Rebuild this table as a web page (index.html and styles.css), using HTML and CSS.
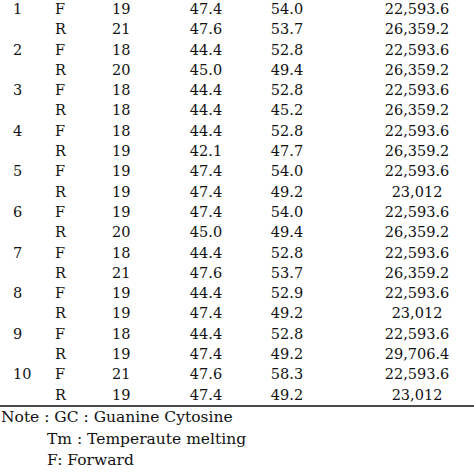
FILE: index.html
```html
<!DOCTYPE html>
<html>
<head>
<meta charset="utf-8">
<link rel="stylesheet" href="styles.css">
</head>
<body>
<div class="page">
  <div class="table">
    <div class="row"><span class="c1">1</span><span class="c2">F</span><span class="c3">19</span><span class="c4">47.4</span><span class="c5">54.0</span><span class="c6">22,593.6</span></div>
    <div class="row"><span class="c1"></span><span class="c2">R</span><span class="c3">21</span><span class="c4">47.6</span><span class="c5">53.7</span><span class="c6">26,359.2</span></div>
    <div class="row"><span class="c1">2</span><span class="c2">F</span><span class="c3">18</span><span class="c4">44.4</span><span class="c5">52.8</span><span class="c6">22,593.6</span></div>
    <div class="row"><span class="c1"></span><span class="c2">R</span><span class="c3">20</span><span class="c4">45.0</span><span class="c5">49.4</span><span class="c6">26,359.2</span></div>
    <div class="row"><span class="c1">3</span><span class="c2">F</span><span class="c3">18</span><span class="c4">44.4</span><span class="c5">52.8</span><span class="c6">22,593.6</span></div>
    <div class="row"><span class="c1"></span><span class="c2">R</span><span class="c3">18</span><span class="c4">44.4</span><span class="c5">45.2</span><span class="c6">26,359.2</span></div>
    <div class="row"><span class="c1">4</span><span class="c2">F</span><span class="c3">18</span><span class="c4">44.4</span><span class="c5">52.8</span><span class="c6">22,593.6</span></div>
    <div class="row"><span class="c1"></span><span class="c2">R</span><span class="c3">19</span><span class="c4">42.1</span><span class="c5">47.7</span><span class="c6">26,359.2</span></div>
    <div class="row"><span class="c1">5</span><span class="c2">F</span><span class="c3">19</span><span class="c4">47.4</span><span class="c5">54.0</span><span class="c6">22,593.6</span></div>
    <div class="row"><span class="c1"></span><span class="c2">R</span><span class="c3">19</span><span class="c4">47.4</span><span class="c5">49.2</span><span class="c6">23,012</span></div>
    <div class="row"><span class="c1">6</span><span class="c2">F</span><span class="c3">19</span><span class="c4">47.4</span><span class="c5">54.0</span><span class="c6">22,593.6</span></div>
    <div class="row"><span class="c1"></span><span class="c2">R</span><span class="c3">20</span><span class="c4">45.0</span><span class="c5">49.4</span><span class="c6">26,359.2</span></div>
    <div class="row"><span class="c1">7</span><span class="c2">F</span><span class="c3">18</span><span class="c4">44.4</span><span class="c5">52.8</span><span class="c6">22,593.6</span></div>
    <div class="row"><span class="c1"></span><span class="c2">R</span><span class="c3">21</span><span class="c4">47.6</span><span class="c5">53.7</span><span class="c6">26,359.2</span></div>
    <div class="row"><span class="c1">8</span><span class="c2">F</span><span class="c3">19</span><span class="c4">44.4</span><span class="c5">52.9</span><span class="c6">22,593.6</span></div>
    <div class="row"><span class="c1"></span><span class="c2">R</span><span class="c3">19</span><span class="c4">47.4</span><span class="c5">49.2</span><span class="c6">23,012</span></div>
    <div class="row"><span class="c1">9</span><span class="c2">F</span><span class="c3">18</span><span class="c4">44.4</span><span class="c5">52.8</span><span class="c6">22,593.6</span></div>
    <div class="row"><span class="c1"></span><span class="c2">R</span><span class="c3">19</span><span class="c4">47.4</span><span class="c5">49.2</span><span class="c6">29,706.4</span></div>
    <div class="row"><span class="c1">10</span><span class="c2">F</span><span class="c3">21</span><span class="c4">47.6</span><span class="c5">58.3</span><span class="c6">22,593.6</span></div>
    <div class="row"><span class="c1"></span><span class="c2">R</span><span class="c3">19</span><span class="c4">47.4</span><span class="c5">49.2</span><span class="c6">23,012</span></div>
  </div>
  <div class="notes">
    <div class="note">Note : GC : Guanine Cytosine</div>
    <div class="note indent">Tm : Temperaute melting</div>
    <div class="note indent">F: Forward</div>
  </div>
</div>
</body>
</html>
```

FILE: styles.css
```css
html, body {
  margin: 0;
  padding: 0;
  background: #ffffff;
}

.page {
  width: 474px;
  height: 474px;
  overflow: hidden;
  font-family: "DejaVu Serif", "Liberation Serif", serif;
  font-size: 14.5px;
  color: #111111;
}

.table {
  margin-top: -1px;
  border-bottom: 2px solid #4a4a4a;
}

.row {
  display: grid;
  grid-template-columns: 42px 58px 64px 84px 78px 148px;
  height: 20.3px;
  line-height: 20.3px;
  white-space: nowrap;
}

.c1 { padding-left: 13px; }
.c2 { padding-left: 13px; }
.c3 { padding-left: 12px; }
.c4 { text-align: center; }
.c5 { text-align: center; }
.c6 { text-align: center; padding-left: 34px; }

.notes {
  padding-top: 0.5px;
  font-size: 15.5px;
}

.note {
  line-height: 21.2px;
  padding-left: 1px;
  white-space: nowrap;
}

.note.indent {
  padding-left: 47px;
}
```
